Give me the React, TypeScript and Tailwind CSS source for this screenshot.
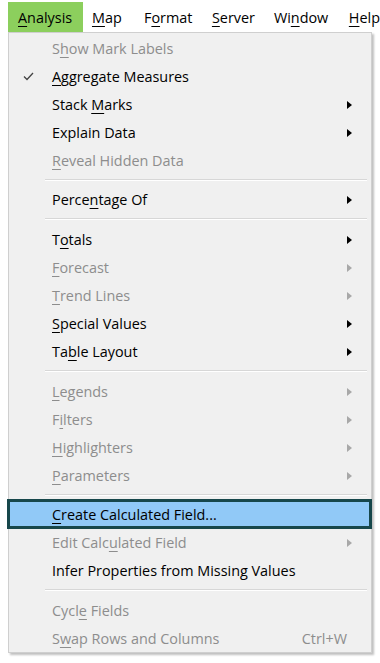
import React from "react";

type Item = {
  label: React.ReactNode;
  disabled?: boolean;
  arrow?: boolean;
  check?: boolean;
  shortcut?: string;
  highlight?: boolean;
};

const U = ({ children }: { children: React.ReactNode }) => (
  <span className="underline underline-offset-[3px] decoration-1">{children}</span>
);

const groups: Item[][] = [
  [
    { label: <>S<U>h</U>ow Mark Labels</>, disabled: true },
    { label: <><U>A</U>ggregate Measures</>, check: true },
    { label: <>Stack <U>M</U>arks</>, arrow: true },
    { label: <>Explain Data</>, arrow: true },
    { label: <><U>R</U>eveal Hidden Data</>, disabled: true },
  ],
  [{ label: <>Perce<U>n</U>tage Of</>, arrow: true }],
  [
    { label: <>T<U>o</U>tals</>, arrow: true },
    { label: <><U>F</U>orecast</>, arrow: true, disabled: true },
    { label: <><U>T</U>rend Lines</>, arrow: true, disabled: true },
    { label: <><U>S</U>pecial Values</>, arrow: true },
    { label: <>Ta<U>b</U>le Layout</>, arrow: true },
  ],
  [
    { label: <><U>L</U>egends</>, arrow: true, disabled: true },
    { label: <>F<U>i</U>lters</>, arrow: true, disabled: true },
    { label: <><U>H</U>ighlighters</>, arrow: true, disabled: true },
    { label: <><U>P</U>arameters</>, arrow: true, disabled: true },
  ],
  [
    { label: <><U>C</U>reate Calculated Field...</>, highlight: true },
    { label: <>Edit Calc<U>u</U>lated Field</>, arrow: true, disabled: true },
    { label: <>Infer Properties from Missing Values</> },
  ],
  [
    { label: <>Cycl<U>e</U> Fields</>, disabled: true },
    { label: <>S<U>w</U>ap Rows and Columns</>, disabled: true, shortcut: "Ctrl+W" },
  ],
];

const sepHeights = ["h-[11px]", "h-[12px]", "h-[12px]", "h-[11px]", "h-[12px]"];

function Arrow({ disabled }: { disabled?: boolean }) {
  return (
    <svg width="5" height="8" viewBox="0 0 5 8" className="shrink-0">
      <path d="M0 0 L5 4 L0 8 Z" fill={disabled ? "#a8a8a8" : "#000000"} />
    </svg>
  );
}

function Row({ item }: { item: Item }) {
  if (item.highlight) {
    return (
      <div className="-ml-[2px] -mr-[1px] h-[30px] -my-[1px] flex items-center bg-[#91c9f7] border-[3px] border-[#17474b] pl-[42px] pt-[2px] text-black relative">
        <span>{item.label}</span>
      </div>
    );
  }
  return (
    <div
      className={`relative h-[28px] flex items-center pl-[43px] pr-[19px] pt-[2px] ${
        item.disabled ? "text-[#8d8d8d]" : "text-black"
      }`}
    >
      {item.check && (
        <svg width="11" height="9" viewBox="0 0 11 9" className="absolute left-[14px] top-[10px]">
          <path d="M1 4.5 L4 7.5 L10 1" stroke="#444" strokeWidth="1.3" fill="none" />
        </svg>
      )}
      <span className="flex-1">{item.label}</span>
      {item.arrow && <Arrow disabled={item.disabled} />}
      {item.shortcut && <span className="mr-[5px]">{item.shortcut}</span>}
    </div>
  );
}

export default function App() {
  return (
    <div
      className="w-[380px] h-[663px] bg-white overflow-hidden text-[14.4px] leading-none"
      style={{ fontFamily: '"Open Sans", "Noto Sans", sans-serif' }}
    >
      <div className="h-[32px] flex items-end text-black">
        <div className="ml-[8px] w-[75px] h-[30px] bg-[#8ccf5d] flex items-center pl-[10px] pt-[3px]">
          <span><U>A</U>nalysis</span>
        </div>
        <div className="ml-[9px] w-[52px] h-[30px] flex items-center pt-[3px]"><span><U>M</U>ap</span></div>
        <div className="w-[68px] h-[30px] flex items-center pt-[3px]"><span>F<U>o</U>rmat</span></div>
        <div className="w-[62px] h-[30px] flex items-center pt-[3px]"><span><U>S</U>erver</span></div>
        <div className="w-[75px] h-[30px] flex items-center pt-[3px]"><span>Wi<U>n</U>dow</span></div>
        <div className="h-[30px] flex items-center whitespace-nowrap pt-[3px]"><span><U>H</U>elp</span></div>
      </div>
      <div className="ml-[8px] w-[366px] flex">
        <div className="w-[364px] bg-[#f0f0f0] border border-[#cfcfcf] pt-[1px] shadow-[2px_2px_2px_rgba(0,0,0,0.25)]">
          {groups.map((g, gi) => (
            <React.Fragment key={gi}>
              {g.map((item, ii) => (
                <Row key={ii} item={item} />
              ))}
              {gi < groups.length - 1 && (
                <div className={`${sepHeights[gi]} flex items-center pl-[36px] pr-[4px]`}>
                  <div className="w-full h-[2px] border-t border-[#d7d7d7] border-b border-b-white" />
                </div>
              )}
            </React.Fragment>
          ))}
        </div>
      </div>
    </div>
  );
}
